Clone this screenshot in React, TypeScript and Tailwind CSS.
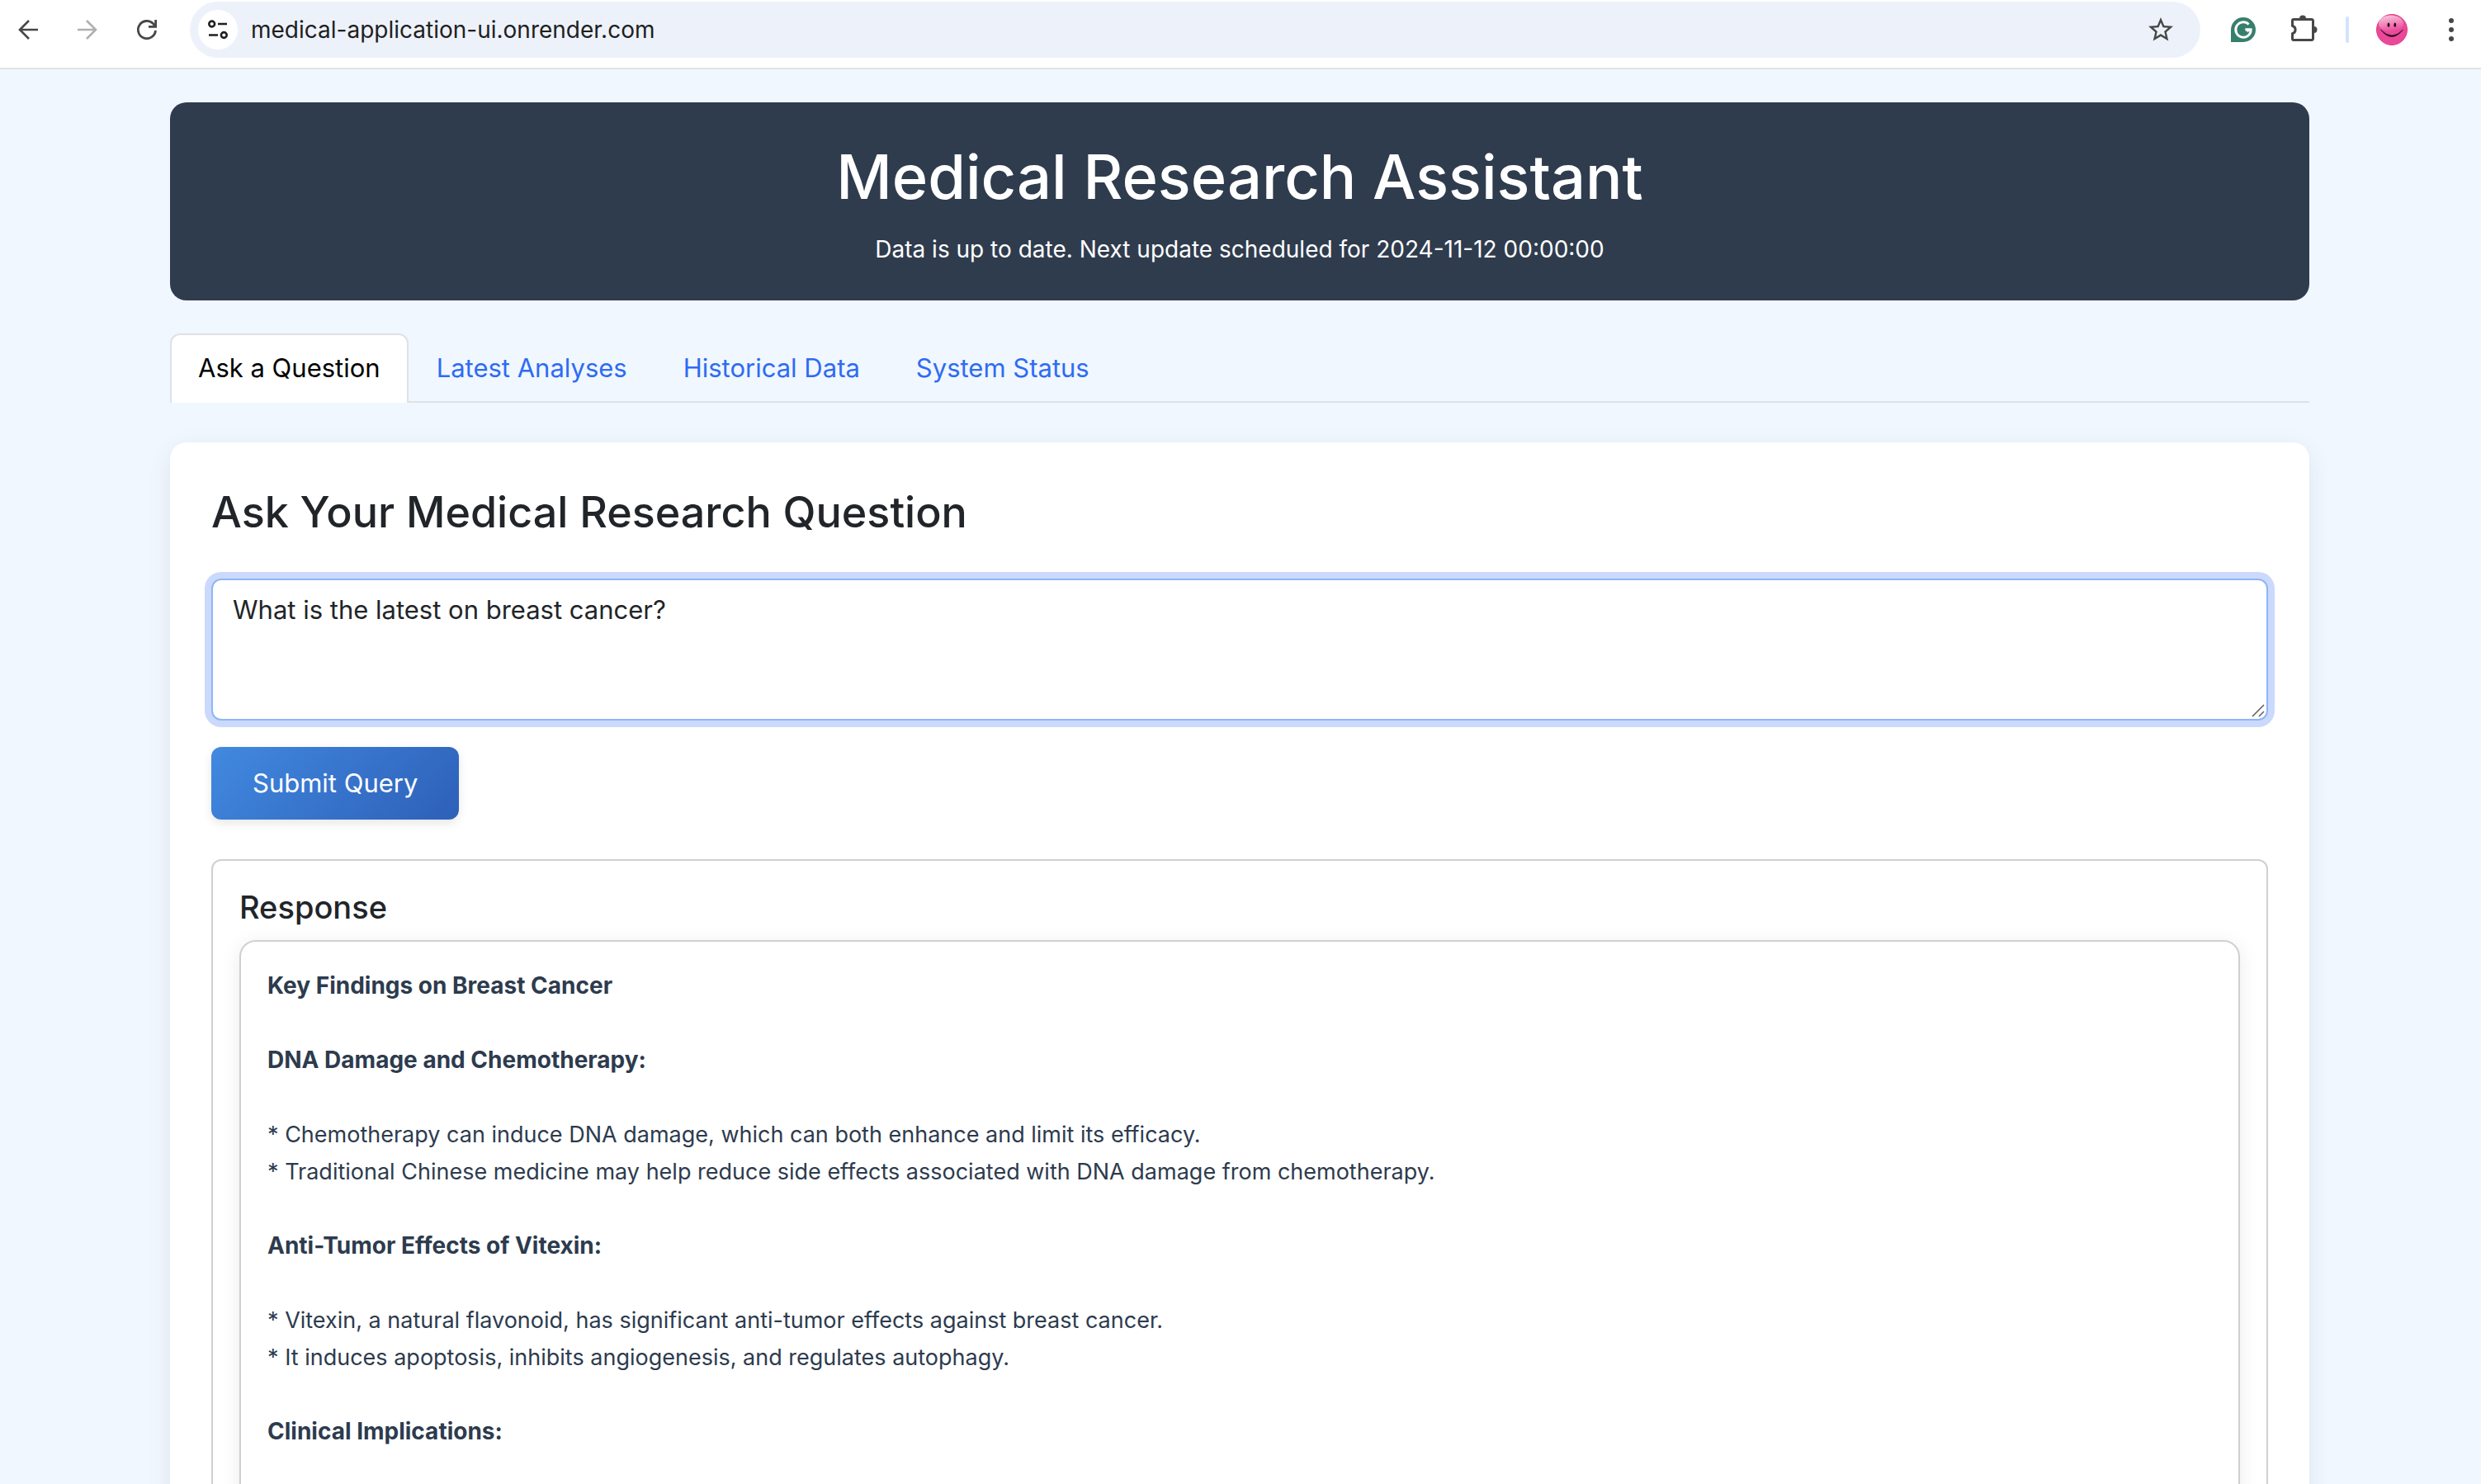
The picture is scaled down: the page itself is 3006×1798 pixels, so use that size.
import { useState } from "react";
import type { ReactNode } from "react";

const tabs = ["Ask a Question", "Latest Analyses", "Historical Data", "System Status"];

const findings = [
  {
    title: "Key Findings on Breast Cancer",
    points: [],
  },
  {
    title: "DNA Damage and Chemotherapy:",
    points: [
      "Chemotherapy can induce DNA damage, which can both enhance and limit its efficacy.",
      "Traditional Chinese medicine may help reduce side effects associated with DNA damage from chemotherapy.",
    ],
  },
  {
    title: "Anti-Tumor Effects of Vitexin:",
    points: [
      "Vitexin, a natural flavonoid, has significant anti-tumor effects against breast cancer.",
      "It induces apoptosis, inhibits angiogenesis, and regulates autophagy.",
    ],
  },
  {
    title: "Clinical Implications:",
    points: [],
  },
];

function IconButton({ label, children }: { label: string; children: ReactNode }) {
  return (
    <button type="button" aria-label={label} className="flex size-10 shrink-0 items-center justify-center">
      {children}
    </button>
  );
}

/** Browser bar: navigation, address field and extension buttons. */
function Toolbar() {
  return (
    <header className="flex h-[84px] shrink-0 items-center border-b-2 border-[#e1e3e1] bg-white pb-[10px] text-[#474747]">
      <div className="flex gap-8 pl-[14px]">
        <IconButton label="Back">
          <svg viewBox="0 0 24 24" className="size-6" fill="none" stroke="currentColor" strokeWidth="2.6">
            <path d="M24 12H2M13 1 2 12l11 11" />
          </svg>
        </IconButton>
        <IconButton label="Forward">
          <svg viewBox="0 0 24 24" className="size-6 text-[#b0b0b0]" fill="none" stroke="currentColor" strokeWidth="2.6">
            <path d="M0 12h22M11 1l11 11-11 11" />
          </svg>
        </IconButton>
        <IconButton label="Reload">
          <svg viewBox="0 0 24 24" className="size-6" fill="none" stroke="currentColor" strokeWidth="2.8">
            <path d="M22.5 13A10.6 10.6 0 1 1 19.5 4.6L22 7.5" />
            <path d="M22.6 0v8.4H14" />
          </svg>
        </IconButton>
      </div>

      <div className="ml-8 flex h-[68px] flex-1 items-center rounded-full bg-[#edf2fa] pr-7 pl-[10px]">
        <button
          type="button"
          aria-label="View site information"
          className="flex size-12 shrink-0 items-center justify-center rounded-full bg-white text-[#1f1f1f]"
        >
          <svg viewBox="0 0 24 24" className="size-6" fill="none" stroke="currentColor" strokeWidth="2.6">
            <circle cx="4.7" cy="5" r="3.4" />
            <path d="M12 5h11M1 18.5h11" />
            <circle cx="19.3" cy="18.5" r="3.4" />
          </svg>
        </button>
        <input
          type="text"
          aria-label="Address"
          defaultValue="medical-application-ui.onrender.com"
          className="ml-4 flex-1 bg-transparent text-[28px] text-[#1f1f1f] outline-none"
        />
        <IconButton label="Bookmark this tab">
          <svg viewBox="0 0 24 24" className="size-9" fill="currentColor">
            <path d="M22 9.24l-7.19-.62L12 2 9.19 8.63 2 9.24l5.46 4.73L5.82 21 12 17.27 18.18 21l-1.63-7.03L22 9.24zM12 15.4l-3.76 2.27 1-4.28-3.32-2.88 4.38-.38L12 6.1l1.71 4.04 4.38.38-3.32 2.88 1 4.28L12 15.4z" />
          </svg>
        </IconButton>
      </div>

      <div className="flex items-center pr-4 pl-8">
        <IconButton label="Grammarly">
          <svg viewBox="0 0 30 30" className="size-[30px]">
            <path d="M15 0a15 15 0 1 1 0 30H0V15A15 15 0 0 1 15 0z" fill="#377f6d" />
            <path d="M21.6 8.6A9.2 9.2 0 1 0 24.2 15H17.5" fill="none" stroke="#fff" strokeWidth="2.9" />
            <path d="M25.6 13.6H17l3.4 4.6z" fill="#fff" />
          </svg>
        </IconButton>
        <div className="ml-[34px]">
          <IconButton label="Extensions">
            <svg viewBox="0 0 32 36" className="h-9 w-8">
              <path
                d="M3 5.5h22a1.5 1.5 0 0 1 1.5 1.5v22a1.5 1.5 0 0 1-1.500 1.500H3A1.5 1.5 0 0 1 1.500 29v-6.200a5 5 0 0 0 0-9.600V7A1.5 1.5 0 0 1 3 5.5z"
                fill="none"
                stroke="currentColor"
                strokeWidth="3"
              />
              <path d="M10 4.500a4 4 0 0 1 8 0zM27.500 14a4 4 0 0 1 0 8z" fill="currentColor" />
            </svg>
          </IconButton>
        </div>
        <div className="mr-8 ml-[30px] h-8 w-1 rounded-full bg-[#d3e3fd]" />
        <IconButton label="Profile">
          <svg viewBox="0 0 38 38" className="size-[38px]">
            <defs>
              <linearGradient id="shine" x1="0.2" y1="0" x2="0.5" y2="1">
                <stop offset="0" stopColor="#fff" stopOpacity="0.7" />
                <stop offset="1" stopColor="#fff" stopOpacity="0" />
              </linearGradient>
            </defs>
            <circle cx="19" cy="19" r="18.5" fill="#ec4899" stroke="#e23a85" />
            <ellipse cx="18" cy="11.5" rx="15" ry="10" fill="url(#shine)" />
            <ellipse cx="15" cy="13.3" rx="1.4" ry="2.8" fill="#1a1014" />
            <ellipse cx="22.8" cy="13.3" rx="1.4" ry="2.8" fill="#1a1014" />
            <path d="M5.5 19q13.500 17 27 0-13.500 14-27 0z" fill="#1a1014" stroke="#1a1014" strokeWidth="0.6" />
          </svg>
        </IconButton>
        <div className="ml-8">
          <IconButton label="Menu">
            <svg viewBox="0 0 6 28" className="h-7 w-[6px]" fill="currentColor">
              <circle cx="3" cy="3" r="3" />
              <circle cx="3" cy="14" r="3" />
              <circle cx="3" cy="25" r="3" />
            </svg>
          </IconButton>
        </div>
      </div>
    </header>
  );
}

export default function App() {
  const [active, setActive] = useState(tabs[0]);
  const [question, setQuestion] = useState("What is the latest on breast cancer?");

  return (
    <div className="flex h-screen flex-col overflow-hidden bg-[#f0f7ff] font-['Inter',sans-serif] text-[#212529]">
      <Toolbar />

      <main className="mx-auto w-full max-w-[2642px] flex-1 pt-10 pr-[26px] pl-6">
        <div className="flex h-60 flex-col items-center rounded-[20px] bg-[#2f3c4e] pt-[42px] text-white">
          <h1 className="text-[74px] leading-[96px] font-medium">Medical Research Assistant</h1>
          <p className="mt-4 text-[28px] leading-[48px]">
            Data is up to date. Next update scheduled for 2024-11-12 00:00:00
          </p>
        </div>

        <div role="tablist" className="mt-10 flex border-b-2 border-[#dee2e6]">
          {tabs.map((tab) => (
            <button
              key={tab}
              type="button"
              role="tab"
              aria-selected={tab === active}
              onClick={() => setActive(tab)}
              className={
                tab === active
                  ? "-mb-[2px] rounded-t-xl border-2 border-b-0 border-[#dee2e6] bg-white px-8 pt-4 pb-[18px] text-[31px] leading-[48px] text-black"
                  : "-mb-[2px] border-2 border-transparent px-8 py-4 text-[31px] leading-[48px] text-[#2f6bf2]"
              }
            >
              {tab}
            </button>
          ))}
        </div>

        <section className="mt-12 rounded-[20px] bg-white p-[50px] shadow-[0_8px_30px_rgba(0,0,0,0.08)]">
          <h2 className="text-[52px] leading-[70px] font-medium">Ask Your Medical Research Question</h2>

          <div className="relative mt-[45px]">
            <textarea
              aria-label="Medical research question"
              value={question}
              onChange={(e) => setQuestion(e.target.value)}
              className="block h-[172px] w-full resize-none rounded-xl border-2 border-[#8fb5f9] bg-white px-6 py-3 text-[31px] leading-[48px] ring-8 ring-[#cbd9fc] outline-none"
            />
            <svg
              viewBox="0 0 16 16"
              className="pointer-events-none absolute right-1 bottom-1 size-4"
              fill="none"
              stroke="#5c5c5c"
              strokeWidth="1.5"
              aria-hidden="true"
            >
              <path d="M1 15 15 1M9 15l6-6" />
            </svg>
          </div>

          <button
            type="button"
            className="mt-8 h-[88px] rounded-xl bg-linear-135 from-[#4289e0] to-[#2e60b8] px-[50px] text-[31px] text-white shadow-[0_4px_12px_rgba(0,0,0,0.1)]"
          >
            Submit Query
          </button>

          <div className="mt-12 rounded-xl border-2 border-[#d0d0d0] p-8">
            <h3 className="text-[38px] leading-[48px] font-medium">Response</h3>
            <div className="mt-4 rounded-[20px] border-2 border-[#d0d0d0] px-8 pt-[31px] pb-8 text-[27px] leading-[45px] text-[#2d3b4e] shadow-[0_4px_24px_rgba(0,0,0,0.08)]">
              {findings.map((f) => (
                <div key={f.title} className="pb-[45px]">
                  <h4 className="text-[28px] font-bold">{f.title}</h4>
                  {f.points.length > 0 && (
                    <div className="pt-[45px]">
                      {f.points.map((point) => (
                        <p key={point}>* {point}</p>
                      ))}
                    </div>
                  )}
                </div>
              ))}
            </div>
          </div>
        </section>
      </main>
    </div>
  );
}
